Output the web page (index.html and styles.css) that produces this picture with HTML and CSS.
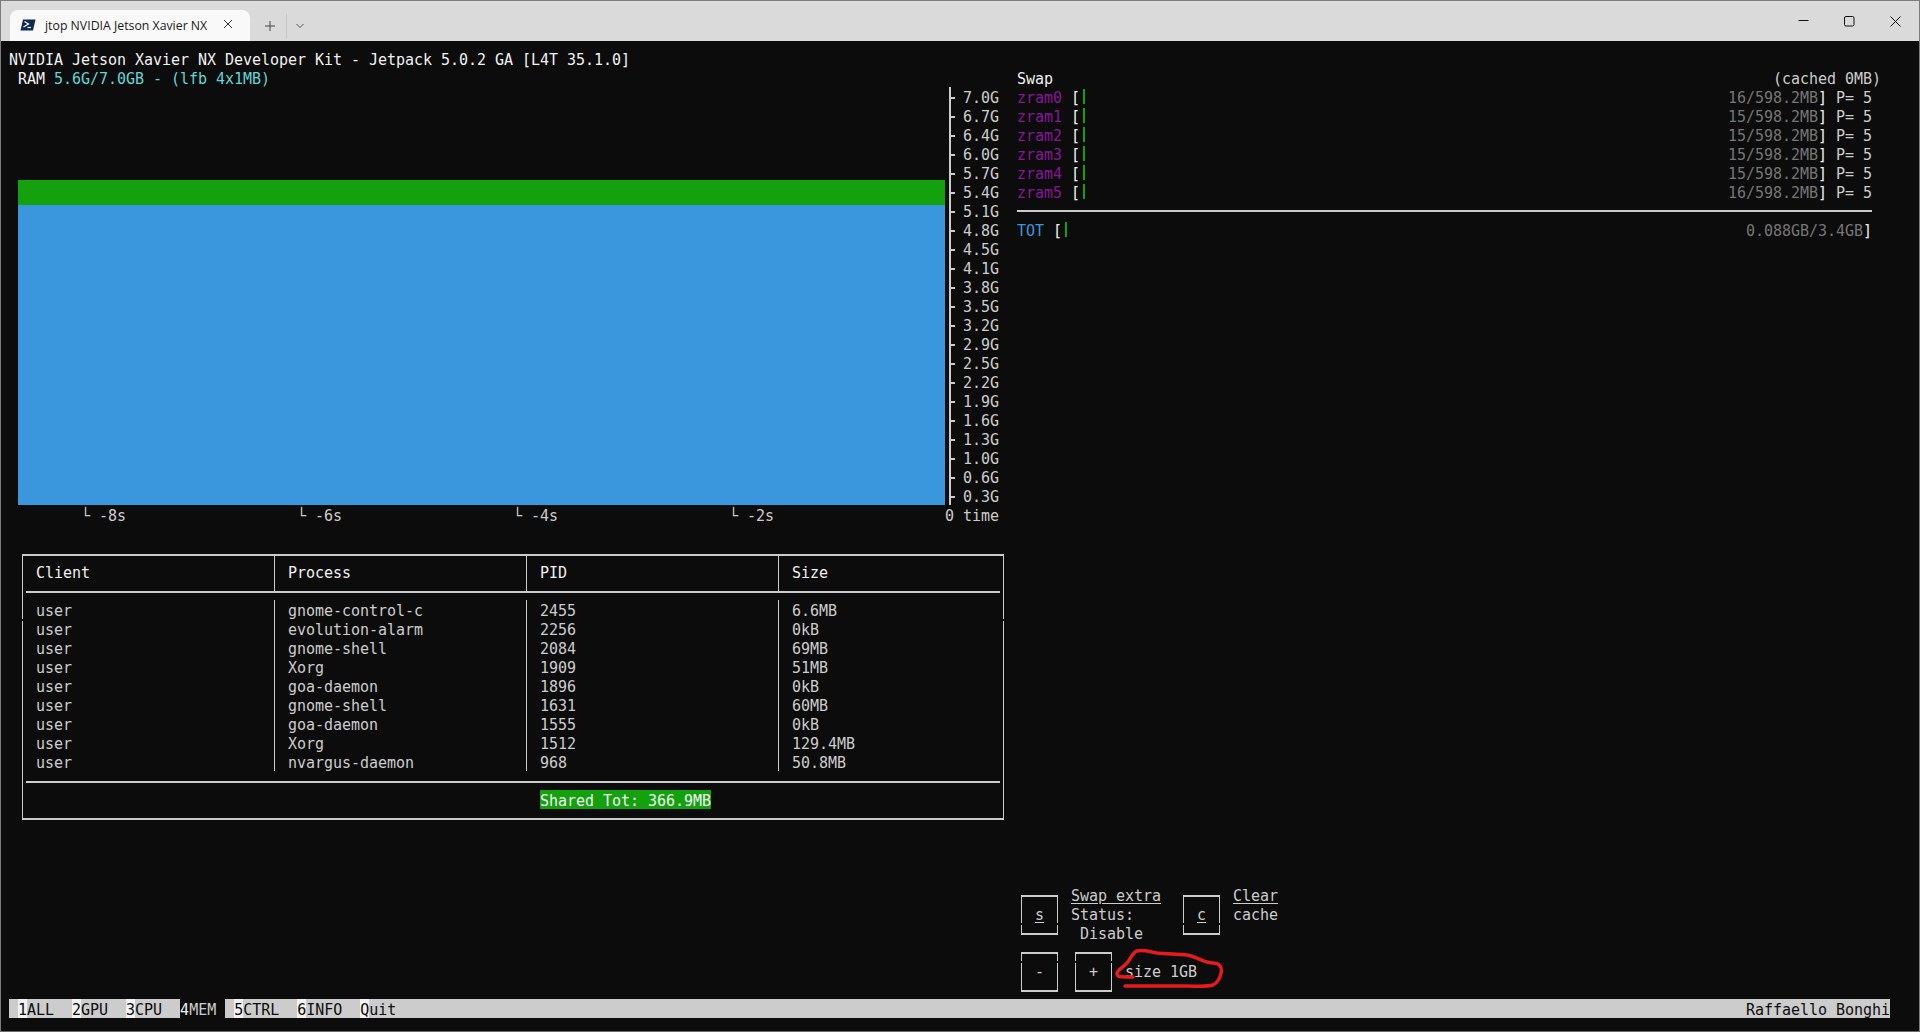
FILE: index.html
```html
<!DOCTYPE html>
<html lang="en">
<head>
<meta charset="utf-8">
<title>jtop NVIDIA Jetson Xavier NX</title>
<link rel="stylesheet" href="styles.css">
</head>
<body>
<div class="window">
  <header class="titlebar">
    <div class="tab">
      <svg class="tab-icon" width="16" height="12" viewBox="0 0 16 12"><path d="M3 0.5H15.5L13 11.5H0.5Z" fill="#0f2a55"/><path d="M4.5 2.5L8.5 5L3.5 8" fill="none" stroke="#fff" stroke-width="1.2"/><path d="M7.5 8.5H11" stroke="#fff" stroke-width="1.2"/></svg>
      <span class="tab-title">jtop NVIDIA Jetson Xavier NX</span>
      <svg class="tab-close" width="10" height="10" viewBox="0 0 10 10"><path d="M1 1L9 9M9 1L1 9" stroke="#333" stroke-width="1"/></svg>
    </div>
    <svg class="new-tab" width="12" height="12" viewBox="0 0 12 12"><path d="M6 1V11M1 6H11" stroke="#444" stroke-width="1"/></svg>
    <span class="tab-sep"></span>
    <svg class="tab-menu" width="8" height="6" viewBox="0 0 8 6"><path d="M0.5 1L4 4.5L7.5 1" fill="none" stroke="#555" stroke-width="1"/></svg>
    <div class="win-controls">
      <svg width="11" height="11" viewBox="0 0 11 11"><path d="M0.5 4.5H10.5" stroke="#111" stroke-width="1"/></svg>
      <svg width="11" height="11" viewBox="0 0 11 11"><rect x="0.5" y="0.5" width="9.5" height="9.5" rx="1.5" fill="none" stroke="#111" stroke-width="1"/></svg>
      <svg width="11" height="11" viewBox="0 0 11 11"><path d="M0.5 0.5L10.5 10.5M10.5 0.5L0.5 10.5" stroke="#111" stroke-width="1"/></svg>
    </div>
  </header>

  <main class="term">
    <div class="line bright">NVIDIA Jetson Xavier NX Developer Kit - Jetpack 5.0.2 GA [L4T 35.1.0]</div>

    <div class="columns">
      <section class="left">
        <div class="line"> <span class="bright">RAM</span> <span class="cyan">5.6G/7.0GB - (lfb 4x1MB)</span></div>

        <div class="chart">
          <div class="plot">
            <div class="plot-empty"></div>
            <div class="plot-lfb"></div>
            <div class="plot-used"></div>
          </div>
          <div class="axis">
            <div class="tick">7.0G</div><div class="tick">6.7G</div><div class="tick">6.4G</div><div class="tick">6.0G</div>
            <div class="tick">5.7G</div><div class="tick">5.4G</div><div class="tick">5.1G</div><div class="tick">4.8G</div>
            <div class="tick">4.5G</div><div class="tick">4.1G</div><div class="tick">3.8G</div><div class="tick">3.5G</div>
            <div class="tick">3.2G</div><div class="tick">2.9G</div><div class="tick">2.5G</div><div class="tick">2.2G</div>
            <div class="tick">1.9G</div><div class="tick">1.6G</div><div class="tick">1.3G</div><div class="tick">1.0G</div>
            <div class="tick">0.6G</div><div class="tick">0.3G</div>
          </div>
        </div>
        <div class="line">        └ -8s                   └ -6s                   └ -4s                   └ -2s                   0 time</div>

        <div class="table">
          <div class="thead">
            <div class="cell bright">Client</div>
            <div class="cell bright">Process</div>
            <div class="cell bright">PID</div>
            <div class="cell bright">Size</div>
          </div>
          <div class="table-rule"></div>
          <div class="tbody">
            <div class="row"><div class="cell">user</div><div class="cell">gnome-control-c</div><div class="cell">2455</div><div class="cell">6.6MB</div></div>
            <div class="row"><div class="cell">user</div><div class="cell">evolution-alarm</div><div class="cell">2256</div><div class="cell">0kB</div></div>
            <div class="row"><div class="cell">user</div><div class="cell">gnome-shell</div><div class="cell">2084</div><div class="cell">69MB</div></div>
            <div class="row"><div class="cell">user</div><div class="cell">Xorg</div><div class="cell">1909</div><div class="cell">51MB</div></div>
            <div class="row"><div class="cell">user</div><div class="cell">goa-daemon</div><div class="cell">1896</div><div class="cell">0kB</div></div>
            <div class="row"><div class="cell">user</div><div class="cell">gnome-shell</div><div class="cell">1631</div><div class="cell">60MB</div></div>
            <div class="row"><div class="cell">user</div><div class="cell">goa-daemon</div><div class="cell">1555</div><div class="cell">0kB</div></div>
            <div class="row"><div class="cell">user</div><div class="cell">Xorg</div><div class="cell">1512</div><div class="cell">129.4MB</div></div>
            <div class="row"><div class="cell">user</div><div class="cell">nvargus-daemon</div><div class="cell">968</div><div class="cell">50.8MB</div></div>
          </div>
          <div class="table-rule foot-rule"></div>
          <div class="tfoot"><span class="shared">Shared Tot: 366.9MB</span></div>
        </div>
      </section>

      <section class="right">
        <div class="line spread"><span class="bright">Swap</span><span class="cached">(cached 0MB)</span></div>
        <div class="swap"><span class="purple">zram0 </span><span class="bracket">[</span><span class="meter"></span><span class="used">16/598.2MB</span><span class="close">]</span> P= 5</div>
        <div class="swap"><span class="purple">zram1 </span><span class="bracket">[</span><span class="meter"></span><span class="used">15/598.2MB</span><span class="close">]</span> P= 5</div>
        <div class="swap"><span class="purple">zram2 </span><span class="bracket">[</span><span class="meter"></span><span class="used">15/598.2MB</span><span class="close">]</span> P= 5</div>
        <div class="swap"><span class="purple">zram3 </span><span class="bracket">[</span><span class="meter"></span><span class="used">15/598.2MB</span><span class="close">]</span> P= 5</div>
        <div class="swap"><span class="purple">zram4 </span><span class="bracket">[</span><span class="meter"></span><span class="used">15/598.2MB</span><span class="close">]</span> P= 5</div>
        <div class="swap"><span class="purple">zram5 </span><span class="bracket">[</span><span class="meter"></span><span class="used">16/598.2MB</span><span class="close">]</span> P= 5</div>
        <div class="swap-rule"></div>
        <div class="swap"><span class="blue">TOT </span><span class="bracket">[</span><span class="meter"></span><span class="used">0.088GB/3.4GB</span><span class="close">]</span></div>

        <div class="controls">
          <div class="control-row">
            <div class="key"><u>s</u></div>
            <div class="key-text"><div class="line"><u>Swap extra</u></div><div class="line">Status:</div><div class="line"> Disable</div></div>
            <div class="key"><u>c</u></div>
            <div class="key-text"><div class="line"><u>Clear</u></div><div class="line">cache</div></div>
          </div>
          <div class="control-row size-row">
            <div class="key">-</div>
            <div class="key key-plus">+</div>
            <div class="size-label line">size 1GB</div>
          </div>
        </div>
      </section>
    </div>

    <footer class="menu">
      <span class="item"> <b>1</b>ALL  </span><span class="item"><b>2</b>GPU  </span><span class="item"><b>3</b>CPU  </span><span class="item active"><b>4</b>MEM </span><span class="item"> <b>5</b>CTRL  </span><span class="item"><b>6</b>INFO  </span><span class="item"><b>Q</b>uit</span>
      <span class="author">Raffaello Bonghi</span>
    </footer>
  </main>

  <svg class="scribble" width="120" height="50" viewBox="0 0 120 50"><path d="M23 32C15 32 9 32 8 31C6 29 7 27 9 25C13 22 15 20 17 18C21 13 23 7 27 6C33 4 40 7 47 8C57 9 67 9 77 10C84 11 90 15 97 17C101 18 106 18 108 19C111 21 112 25 111 28C110 33 107 38 103 40C96 42 87 41 77 41L15 41" fill="none" stroke="#e61c1c" stroke-width="3.5" stroke-linecap="round" stroke-linejoin="round"/></svg>
</div>
</body>
</html>
```

FILE: styles.css
```css
* { box-sizing: border-box; }
html, body { margin: 0; padding: 0; background: #0c0c0c; }
body { width: 1920px; height: 1032px; overflow: hidden; }

.window {
  position: relative;
  width: 1920px;
  height: 1032px;
  display: flex;
  flex-direction: column;
  border: 1px solid #7c7c7c;
  border-bottom-color: #6a6a6a;
  background: #0c0c0c;
}

.titlebar {
  height: 40px;
  flex: none;
  display: flex;
  align-items: flex-start;
  background: #dadada;
  color: #111;
  font-family: "Open Sans", "Noto Sans", sans-serif;
}
.tab {
  margin: 9px 0 0 9px;
  width: 240px;
  height: 31px;
  display: flex;
  align-items: center;
  padding: 0 0 0 10px;
  background: #f9f9f9;
  border-radius: 8px 8px 0 0;
}
.tab-icon { flex: none; margin-top: -1px; }
.tab-title {
  margin-left: 9px;
  width: 164px;
  font-size: 12.3px;
  white-space: nowrap;
  color: #1a1a1a;
}
.tab-close { margin-left: 14px; margin-top: -3px; }
.new-tab { margin: 19px 0 0 14px; }
.tab-sep { width: 1px; height: 24px; margin: 13px 0 0 10px; background: #c6c6c6; }
.tab-menu { margin: 22px 0 0 9px; }
.win-controls {
  margin: 15px 0 0 auto;
  padding-right: 18px;
  display: flex;
  gap: 35px;
}

.term {
  flex: 1;
  min-height: 0;
  padding: 8px 0 0 8px;
  display: flex;
  flex-direction: column;
  color: #cccccc;
  font-family: "DejaVu Sans Mono", "Liberation Mono", monospace;
  font-size: 15px;
  letter-spacing: -0.03px;
  line-height: 22px;
}
.line { height: 19px; white-space: pre; }
.bright { color: #f2f2f2; }
.cyan { color: #61d6d6; }
.purple { color: #881798; }
.blue { color: #3a96dd; }

.columns { display: flex; height: 931px; flex: none; }
.left { width: 1008px; flex: none; }
.right { width: 864px; flex: none; display: flex; flex-direction: column; }
.spread { display: flex; justify-content: space-between; }

/* Memory chart */
.chart { display: flex; height: 418px; margin-left: 9px; }
.plot {
  width: 927px;
  flex: none;
  display: flex;
  flex-direction: column;
}
.plot-empty { height: 93px; }
.plot-lfb { height: 25px; background: #13a10e; }
.plot-used { height: 300px; background: #3a96dd; }
.axis {
  margin-left: 4px;
  width: 68px;
  height: 418px;
  border-left: 2px solid #cccccc;
}
.tick {
  height: 19px;
  padding-left: 12px;
  background: linear-gradient(#cccccc, #cccccc) 0 10px / 4px 2px no-repeat;
}

/* Client table */
.table {
  position: relative;
  margin: 30px 0 0 13px;
  width: 982px;
  height: 266px;
  border: solid #cccccc;
  border-width: 2px 1px;
  display: flex;
  flex-direction: column;
}
.table::after {
  content: "";
  position: absolute;
  left: -1px;
  right: -1px;
  top: 63px;
  height: 2px;
  background: linear-gradient(90deg, #0c0c0c 1px, transparent 1px, transparent 981px, #0c0c0c 981px);
}
.thead, .row {
  display: grid;
  grid-template-columns: 251px 252px 252px 1fr;
}
.thead { height: 35px; flex: none; }
.thead .cell { height: 35px; padding-top: 6px; }
.table-rule { height: 2px; flex: none; margin: 0 3px 0 3px; background: #cccccc; }
.tbody { margin-top: 7px; display: flex; flex-direction: column; }
.row { height: 19px; }
.cell { height: 19px; padding-left: 13px; white-space: pre; }
.thead .cell + .cell,
.row .cell + .cell { border-left: 1px solid #cccccc; }
.foot-rule { margin-top: 10px; }
.tfoot {
  height: 19px;
  margin-top: 7px;
  padding-left: 517px;
}
.shared {
  display: block;
  width: 171px;
  height: 19px;
  background: #13a10e;
  color: #f2f2f2;
}

/* Swap panel */
.swap { display: flex; height: 19px; padding-right: 9px; white-space: pre; }
.bracket { color: #f2f2f2; }
.meter {
  width: 9px;
  height: 19px;
  background: linear-gradient(#13a10e, #13a10e) 3px 2px / 2px 15px no-repeat;
}
.used { margin-left: auto; color: #767676; }
.close { color: #f2f2f2; }
.swap-rule {
  height: 2px;
  margin: 9px 9px 8px 0;
  background: #cccccc;
}

/* Keys */
.controls { margin-top: auto; }
.control-row { display: flex; height: 66px; padding-left: 4px; }
.size-row { height: 48px; }
.key {
  position: relative;
  width: 37px;
  height: 40px;
  margin-top: 10px;
  flex: none;
  display: flex;
  align-items: center;
  justify-content: center;
  border: solid #cccccc;
  border-width: 2px 1px;
}
.key::after {
  content: "";
  position: absolute;
  left: -1px;
  right: -1px;
  top: 26px;
  height: 2px;
  background: linear-gradient(90deg, #0c0c0c 1px, transparent 1px, transparent 36px, #0c0c0c 36px);
}
.key u, .key-text u { text-underline-offset: 2px; text-decoration-thickness: 1px; }
.key-text { margin-left: 13px; width: 112px; }
.key-plus { margin-left: 17px; }
.size-row .key { margin-top: 1px; }
.size-row .key::after { top: 7px; }
.size-label { margin: 10px 0 0 13px; }

/* Bottom menu */
.menu {
  height: 19px;
  width: 1881px;
  flex: none;
  display: flex;
  white-space: pre;
  background: #cccccc;
  color: #0c0c0c;
}
.item { height: 19px; }
.item b { display: inline-block; height: 19px; vertical-align: top; font-weight: normal; background: #f2f2f2; }
.item.active { background: #0c0c0c; color: #cccccc; }
.item.active b { background: #0c0c0c; color: #f2f2f2; }
.author { margin-left: auto; height: 19px; }

.scribble {
  position: absolute;
  left: 1109px;
  top: 944px;
}
```
